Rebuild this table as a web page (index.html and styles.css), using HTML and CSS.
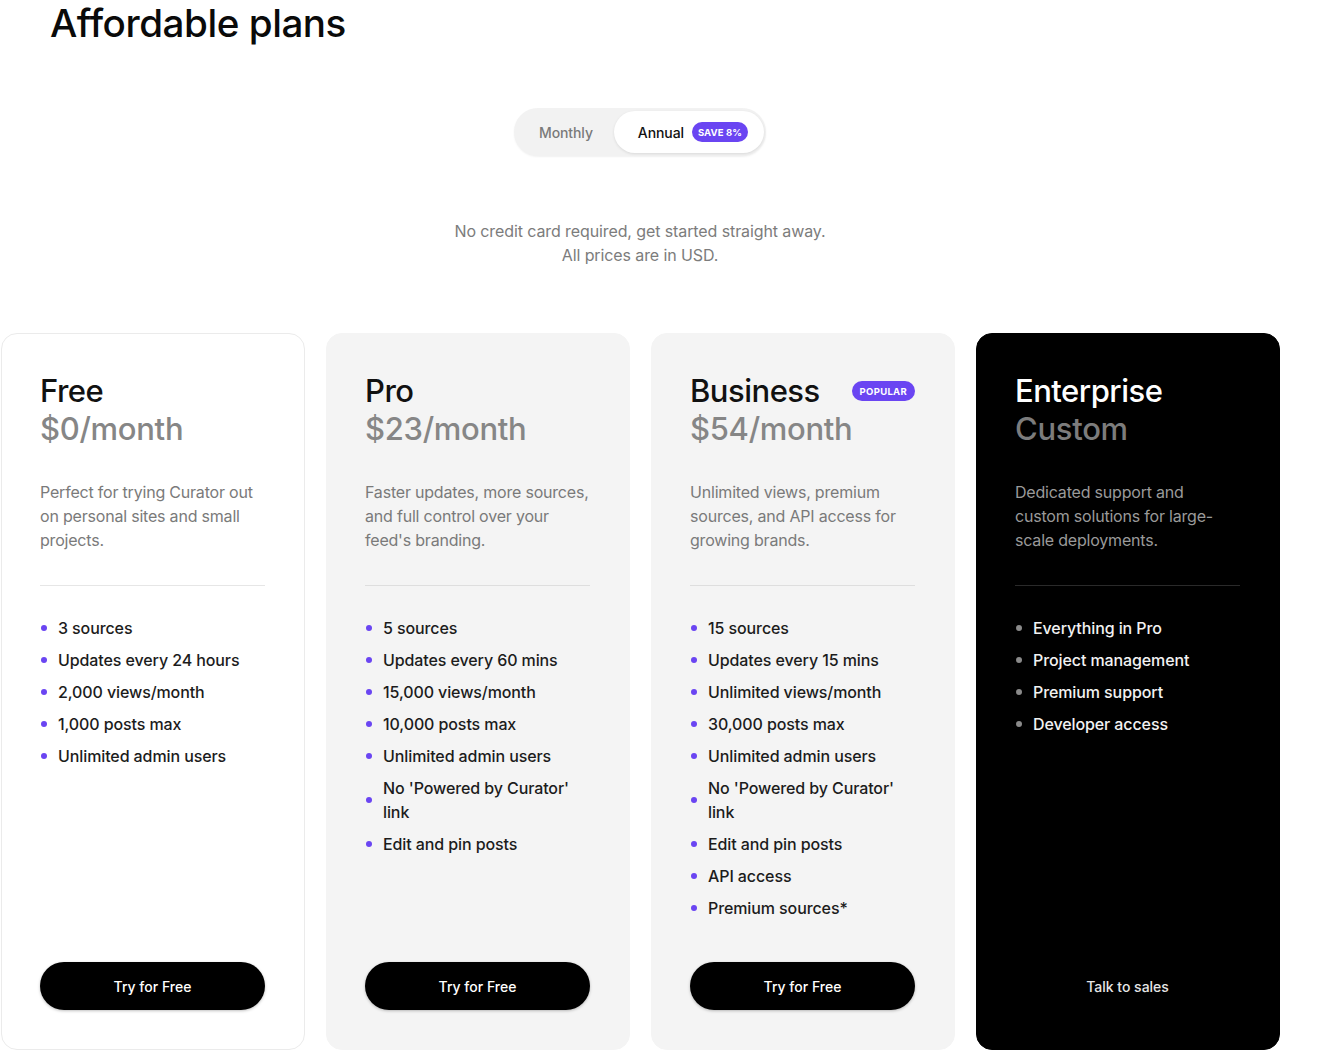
FILE: index.html
```html
<!DOCTYPE html>
<html lang="en">
<head>
<meta charset="utf-8">
<title>Affordable plans</title>
<link rel="stylesheet" href="styles.css">
</head>
<body>
<main class="page">
  <h1 class="page-title">Affordable plans</h1>

  <div class="toggle-wrap">
    <div class="toggle">
      <span class="toggle-opt">Monthly</span>
      <span class="toggle-opt active">Annual <span class="badge">SAVE 8%</span></span>
    </div>
  </div>

  <p class="note">No credit card required, get started straight away.<br>All prices are in USD.</p>

  <section class="plans">
    <article class="card card-free">
      <div class="card-head">
        <h2 class="plan-name">Free</h2>
      </div>
      <div class="plan-price">$0/month</div>
      <p class="plan-desc">Perfect for trying Curator out on personal sites and small projects.</p>
      <hr class="divider">
      <ul class="features">
        <li>3 sources</li>
        <li>Updates every 24 hours</li>
        <li>2,000 views/month</li>
        <li>1,000 posts max</li>
        <li>Unlimited admin users</li>
      </ul>
      <a class="btn" href="#">Try for Free</a>
    </article>

    <article class="card card-grey">
      <div class="card-head">
        <h2 class="plan-name">Pro</h2>
      </div>
      <div class="plan-price">$23/month</div>
      <p class="plan-desc">Faster updates, more sources, and full control over your feed's branding.</p>
      <hr class="divider">
      <ul class="features">
        <li>5 sources</li>
        <li>Updates every 60 mins</li>
        <li>15,000 views/month</li>
        <li>10,000 posts max</li>
        <li>Unlimited admin users</li>
        <li>No 'Powered by Curator' link</li>
        <li>Edit and pin posts</li>
      </ul>
      <a class="btn" href="#">Try for Free</a>
    </article>

    <article class="card card-grey">
      <div class="card-head">
        <h2 class="plan-name">Business</h2>
        <span class="badge badge-popular">POPULAR</span>
      </div>
      <div class="plan-price">$54/month</div>
      <p class="plan-desc">Unlimited views, premium sources, and API access for growing brands.</p>
      <hr class="divider">
      <ul class="features">
        <li>15 sources</li>
        <li>Updates every 15 mins</li>
        <li>Unlimited views/month</li>
        <li>30,000 posts max</li>
        <li>Unlimited admin users</li>
        <li>No 'Powered by Curator' link</li>
        <li>Edit and pin posts</li>
        <li>API access</li>
        <li>Premium sources*</li>
      </ul>
      <a class="btn" href="#">Try for Free</a>
    </article>

    <article class="card card-dark">
      <div class="card-head">
        <h2 class="plan-name">Enterprise</h2>
      </div>
      <div class="plan-price">Custom</div>
      <p class="plan-desc">Dedicated support and custom solutions for large-scale deployments.</p>
      <hr class="divider">
      <ul class="features">
        <li>Everything in Pro</li>
        <li>Project management</li>
        <li>Premium support</li>
        <li>Developer access</li>
      </ul>
      <a class="btn" href="#">Talk to sales</a>
    </article>
  </section>
</main>
</body>
</html>
```
FILE: styles.css
```css
* { box-sizing: border-box; }

html, body {
  margin: 0;
  padding: 0;
  background: #ffffff;
}

body {
  font-family: Inter, "Noto Sans", "Liberation Sans", sans-serif;
  color: #111;
}

.page {
  width: 1280px;
}

.page-title {
  margin: 0;
  padding-left: 50px;
  font-size: 38.6px;
  line-height: 46px;
  font-weight: 500;
  letter-spacing: -0.45px;
  color: #0a0a0a;
}

.toggle-wrap {
  display: flex;
  justify-content: center;
  margin-top: 62px;
}

.toggle {
  display: flex;
  align-items: center;
  height: 48px;
  padding: 3px 2px 3px 3px;
  background: #f2f2f2;
  border-radius: 24px;
  box-shadow: 0 1px 2px rgba(0,0,0,0.06);
}

.toggle-opt {
  display: flex;
  align-items: center;
  height: 42px;
  padding: 0 22px 0 21px;
  font-size: 14px;
  font-weight: 500;
  color: #7a7a7a;
  border-radius: 21px;
  letter-spacing: -0.1px;
}

.toggle-opt:first-child {
  padding: 0 21px 0 22px;
}

.toggle-opt.active {
  background: #fff;
  color: #111;
  padding: 0 16px 0 24px;
  gap: 8px;
  box-shadow: 0 1px 3px rgba(0,0,0,0.10);
}

.badge {
  display: inline-flex;
  align-items: center;
  justify-content: center;
  height: 20px;
  padding: 0 6px;
  border-radius: 10px;
  background: #6a45f2;
  color: #fff;
  font-size: 9.5px;
  font-weight: 700;
  letter-spacing: 0.1px;
}

.note {
  margin: 63px 0 0;
  text-align: center;
  font-size: 16px;
  line-height: 24px;
  color: #7c7c7c;
  letter-spacing: -0.1px;
}

.plans {
  display: grid;
  grid-template-columns: repeat(4, 1fr);
  gap: 21px;
  margin-top: 66px;
  padding-left: 1px;
}

.card {
  display: flex;
  flex-direction: column;
  padding: 38px 39px 39px 38px;
  border-radius: 16px;
  border: 1px solid transparent;
  min-height: 717px;
}

.card-free {
  background: #fff;
  border-color: #ebebeb;
}

.card-grey {
  background: #f4f4f4;
  border-color: #f4f4f4;
}

.card-dark {
  background: #000;
  border-color: #000;
  color: #fff;
}

.card-head {
  display: flex;
  align-items: center;
  justify-content: space-between;
}

.plan-name {
  margin: 0;
  font-size: 31px;
  line-height: 38px;
  font-weight: 500;
  letter-spacing: -0.5px;
}

.badge-popular {
  height: 20px;
  padding: 0 8px;
  font-size: 9.5px;
  letter-spacing: 0.3px;
}

.plan-price {
  font-size: 31px;
  line-height: 38px;
  font-weight: 500;
  color: #868686;
  letter-spacing: -0.3px;
}

.card-dark .plan-price { color: #7c7c7c; }

.plan-desc {
  margin: 32px 0 0;
  font-size: 16px;
  line-height: 24px;
  color: #7a7a7a;
  letter-spacing: -0.2px;
}

.card-dark .plan-desc { color: #9a9a9a; }

.divider {
  margin: 33px 0 0;
  border: 0;
  height: 1px;
  background: #e6e6e6;
}

.card-grey .divider { background: #dedede; }
.card-dark .divider { background: #2a2a2a; }

.features {
  list-style: none;
  margin: 30px 0 0;
  padding: 0;
  display: flex;
  flex-direction: column;
  gap: 8px;
}

.features li {
  position: relative;
  display: flex;
  align-items: center;
  padding-left: 18px;
  font-size: 16px;
  line-height: 24px;
  font-weight: 500;
  color: #1c1c1c;
  letter-spacing: -0.1px;
}

.features li::before {
  content: "";
  position: absolute;
  left: 1px;
  top: 50%;
  width: 6px;
  height: 6px;
  margin-top: -3px;
  border-radius: 50%;
  background: #6a45f2;
}

.card-dark .features li { color: #f2f2f2; }
.card-dark .features li::before { background: #8a8a8a; }

.btn {
  margin-top: auto;
  display: flex;
  align-items: center;
  justify-content: center;
  height: 48px;
  border-radius: 24px;
  background: #000;
  color: #fff;
  font-size: 14px;
  font-weight: 500;
  text-decoration: none;
  box-shadow: 0 1px 3px rgba(0,0,0,0.25);
}

.card-dark .btn { box-shadow: none; color: #e6e6e6; }
```
